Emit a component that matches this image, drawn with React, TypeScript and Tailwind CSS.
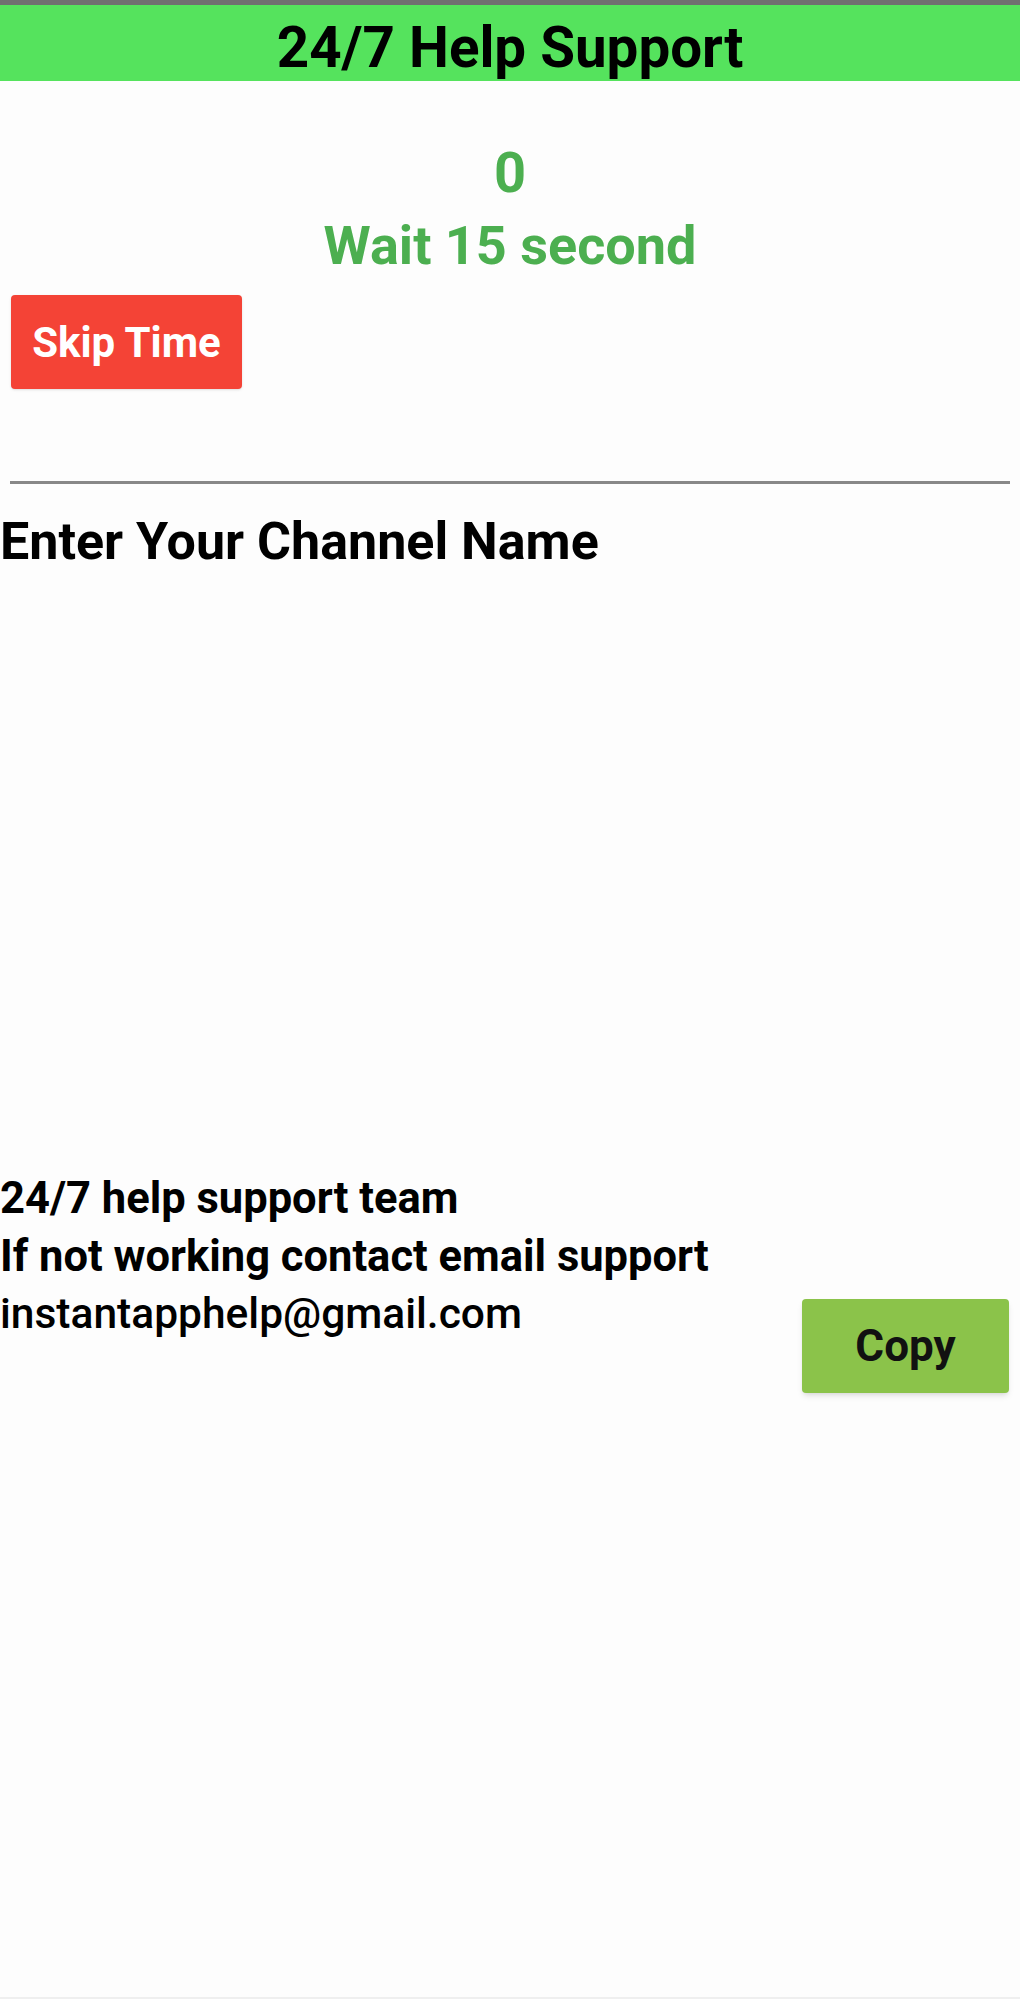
export default function App() {
  return (
    <div
      className="flex h-[2007px] w-[1020px] flex-col bg-[#fdfdfd] text-black"
      style={{ fontFamily: "Roboto, 'Liberation Sans', sans-serif" }}
    >
      <div className="h-[5px] bg-[#707070]" />

      <header className="h-[76px] bg-[#55e35d] pt-[10px] text-center">
        <h1 className="text-[56.5px] font-bold leading-[66px]">24/7 Help Support</h1>
      </header>

      <div className="mt-[64px] text-center font-bold text-[#4caf50]">
        <p className="text-[56px] leading-[56px]">0</p>
        <p className="mt-[18px] text-[54px] leading-[53px]">Wait 15 second</p>
      </div>

      <div className="mt-[23px] pl-[11px]">
        <button className="h-[94px] w-[231px] rounded-[4px] bg-[#f44336] text-[42px] font-bold text-white shadow-sm">
          Skip Time
        </button>
      </div>

      <hr className="mx-[10px] mt-[92px] h-[3px] border-0 bg-[#888888]" />

      <h2 className="mt-[32px] text-[52px] font-bold leading-[52px]">Enter Your Channel Name</h2>

      <div className="mt-[602px] flex items-start justify-between pr-[11px]">
        <div className="text-[43.5px] font-bold leading-[57.5px]">
          <p>24/7 help support team</p>
          <p>If not working contact email support</p>
          <p className="text-[42.5px] font-medium">instantapphelp@gmail.com</p>
        </div>
        <button className="mt-[129px] h-[94px] w-[207px] rounded-[4px] bg-[#8bc34a] text-[44px] font-bold text-[#111111] shadow-md">
          Copy
        </button>
      </div>

      <div className="flex-1" />
      <div className="h-[2px] bg-[#efefef]" />
      <div className="h-[8px] bg-white" />
    </div>
  );
}
